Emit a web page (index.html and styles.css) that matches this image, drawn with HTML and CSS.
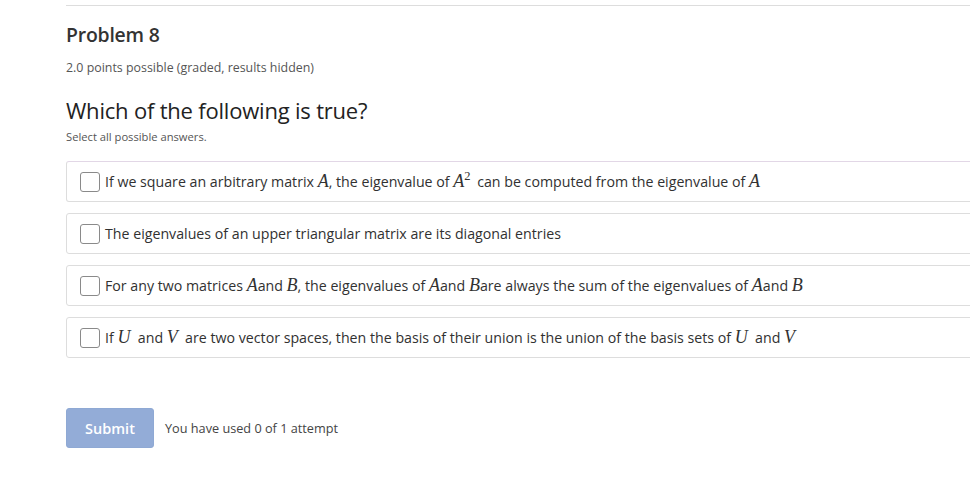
FILE: index.html
```html
<!DOCTYPE html>
<html>
<head>
<meta charset="utf-8">
<link rel="stylesheet" href="styles.css">
</head>
<body>
<div class="page">
  <div class="rule"></div>
  <h2 class="title">Problem 8</h2>
  <div class="meta">2.0 points possible (graded, results hidden)</div>
  <h3 class="question">Which of the following is true?</h3>
  <div class="hint">Select all possible answers.</div>
  <div class="options">
    <label class="option first"><span class="box"></span><span class="text">If we square an arbitrary matrix <i class="m">A</i>, the eigenvalue of <i class="m">A</i><sup class="m2">2</sup> can be computed from the eigenvalue of <i class="m">A</i></span></label>
    <label class="option"><span class="box"></span><span class="text">The eigenvalues of an upper triangular matrix are its diagonal entries</span></label>
    <label class="option"><span class="box"></span><span class="text">For any two matrices <i class="m">A</i>and <i class="m">B</i>, the eigenvalues of <i class="m">A</i>and <i class="m">B</i>are always the sum of the eigenvalues of <i class="m">A</i>and <i class="m">B</i></span></label>
    <label class="option"><span class="box"></span><span class="text">If <i class="m">U</i>&nbsp; and <i class="m">V</i>&nbsp; are two vector spaces, then the basis of their union is the union of the basis sets of <i class="m">U</i>&nbsp; and <i class="m">V</i></span></label>
  </div>
  <div class="actions">
    <button class="submit">Submit</button>
    <span class="attempts">You have used 0 of 1 attempt</span>
  </div>
</div>
</body>
</html>
```
FILE: styles.css
```css
html, body { margin: 0; padding: 0; background: #fff; overflow: hidden; }
body { font-family: "Open Sans", "Noto Sans", sans-serif; color: #313131; }
.page { padding-left: 66px; width: 912px; }
.rule { height: 1px; background: #ddd; margin-top: 5px; }
.title { margin: 16px 0 0; font-size: 19.4px; font-weight: 600; color: #333; line-height: 26px; letter-spacing: -0.2px; }
.meta { margin-top: 12px; font-size: 12.4px; color: #555; line-height: 16px; }
.question { margin: 20px 0 0; font-size: 22px; font-weight: 400; color: #222; line-height: 28px; letter-spacing: -0.2px; }
.hint { margin-top: 5px; font-size: 11.2px; color: #555; line-height: 15px; }
.options { margin-top: 17px; display: flex; flex-direction: column; gap: 11px; }
.option { display: flex; align-items: center; height: 39px; border: 1px solid #ddd; border-radius: 3px; padding-left: 13px; font-size: 14.2px; color: #313131; }
.option.first { border-top-color: #e2d7e6; }
.box { width: 18px; height: 18px; border: 1px solid #8a8a8a; border-radius: 3px; margin-right: 5px; flex: none; }
.text { white-space: nowrap; }
.m { font-family: "Liberation Serif", "DejaVu Serif", serif; font-style: italic; font-size: 18px; }
.m2 { font-family: "Liberation Serif", serif; font-size: 12.5px; vertical-align: 7px; line-height: 0; margin-right: 3px; }
.actions { margin-top: 50px; display: flex; align-items: center; gap: 11px; }
.submit { width: 88px; height: 40px; border: 1px solid #8fa9d4; border-radius: 3px; background: #93acd7; color: #fff; font-family: "Open Sans", sans-serif; font-size: 14.5px; font-weight: 600; padding: 0; }
.attempts { font-size: 12.7px; color: #444; }
```
